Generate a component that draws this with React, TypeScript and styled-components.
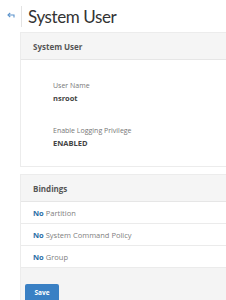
import styled, { createGlobalStyle } from "styled-components";

const GlobalStyle = createGlobalStyle`
	html, body {
		margin: 0;
		padding: 0;
		background: #ffffff;
		overflow: hidden;
	}
	body {
		font-family: "Open Sans", "Noto Sans", sans-serif;
		color: #333;
	}
`;

const bindings = ["Partition", "System Command Policy", "Group"];

function App() {
	return (
		<Page>
			<GlobalStyle />
			<TitleBar>
				<BackButton aria-label="back">
					<svg width="8" height="6" viewBox="0 0 8 6">
						<path d="M7 5.5 V3 H1.5" fill="none" stroke="#5a92cb" strokeWidth="1.1" />
						<path d="M3.2 1 L1 3 L3.2 5" fill="none" stroke="#5a92cb" strokeWidth="1.1" />
					</svg>
				</BackButton>
				<Title>System User</Title>
			</TitleBar>
			<Content>
				<Panel>
					<PanelHeader>System User</PanelHeader>
					<PanelBody>
						<Field>
							<Label>User Name</Label>
							<Value>nsroot</Value>
						</Field>
						<Field>
							<Label>Enable Logging Privilege</Label>
							<Value>ENABLED</Value>
						</Field>
					</PanelBody>
				</Panel>
				<Panel>
					<PanelHeader>Bindings</PanelHeader>
					{bindings.map((name) => (
						<BindingRow key={name}>
							<Count>No</Count> {name}
						</BindingRow>
					))}
					<Footer>
						<SaveButton>Save</SaveButton>
					</Footer>
				</Panel>
			</Content>
		</Page>
	);
}

const Page = styled.div`
	width: 226px;
	height: 300px;
	overflow: hidden;
`;

const TitleBar = styled.div`
	display: flex;
	align-items: center;
	height: 32px;
`;

const BackButton = styled.div`
	width: 21px;
	height: 20px;
	display: flex;
	align-items: center;
	justify-content: center;
	margin-top: -2px;
`;

const Title = styled.h1`
	margin: 0;
	padding-left: 6px;
	border-left: 1px solid #e3e3e3;
	font-family: Lato, "Open Sans", sans-serif;
	font-size: 17px;
	letter-spacing: -0.4px;
	line-height: 21px;
	font-weight: 400;
	color: #333;
	white-space: nowrap;
`;

const Content = styled.div`
	margin-left: 20px;
	margin-right: -20px;
	display: flex;
	flex-direction: column;
	gap: 7px;
`;

const Panel = styled.section`
	border: 1px solid #ececec;
	background: #fff;
`;

const PanelHeader = styled.div`
	height: 26px;
	display: flex;
	align-items: center;
	padding-left: 12px;
	background: #f5f5f5;
	border-bottom: 1px solid #e6e6e6;
	font-size: 8px;
	font-weight: 700;
	color: #555;
`;

const PanelBody = styled.div`
	padding: 21px 0 18px 32px;
	display: flex;
	flex-direction: column;
	gap: 23px;
`;

const Field = styled.div`
	display: flex;
	flex-direction: column;
	gap: 3px;
`;

const Label = styled.div`
	font-size: 7px;
	line-height: 9px;
	color: #777;
`;

const Value = styled.div`
	font-size: 7.5px;
	line-height: 10px;
	font-weight: 700;
	color: #444;
`;

const BindingRow = styled.div`
	height: 21px;
	display: flex;
	align-items: center;
	gap: 2px;
	padding-left: 12px;
	border-bottom: 1px solid #ebebeb;
	font-size: 7.5px;
	color: #808080;
	&:last-of-type {
		border-bottom: none;
	}
`;

const Count = styled.span`
	font-weight: 700;
	color: #2a6ea6;
`;

const Footer = styled.div`
	background: #f4f4f4;
	padding: 10px 4px 20px;
`;

const SaveButton = styled.button`
	width: 34px;
	height: 18px;
	border: none;
	border-radius: 2px;
	background: #3a80c4;
	color: #fff;
	font-family: "Open Sans", sans-serif;
	font-size: 6.5px;
	font-weight: 700;
	padding: 0;
`;

export default App;
